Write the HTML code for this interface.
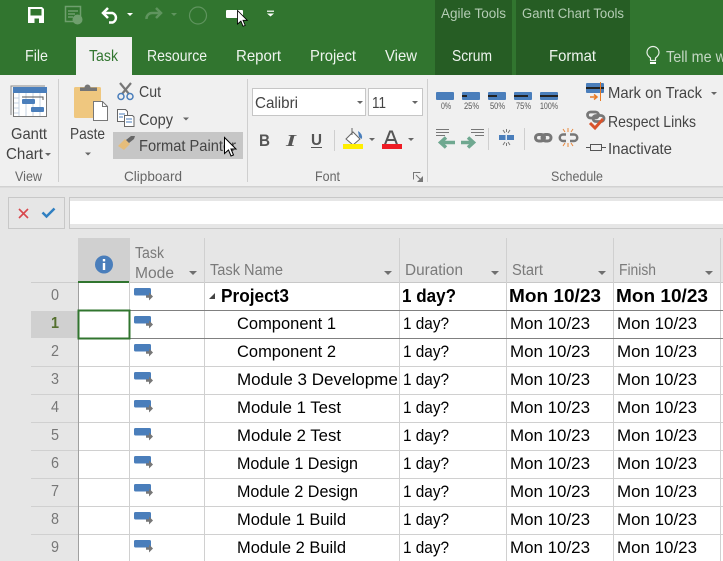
<!DOCTYPE html>
<html><head><meta charset="utf-8"><style>
html,body{margin:0;padding:0;background:#e6e6e6;width:723px;height:561px;overflow:hidden}
svg{display:block}
text{font-family:"Liberation Sans",sans-serif;font-size:16px;fill:#444;white-space:pre}
.t{fill:#eef4ee;font-size:16px}
.c{fill:#b4ccb4;font-size:13.5px}
.h{fill:#7a7a7a;font-size:15.5px}
.r{fill:#000;font-size:17px}
.b{fill:#000;font-size:18.5px;font-weight:bold}
.n{fill:#777;font-size:15.5px}
.g{fill:#666;font-size:14px}
.p{fill:#555;font-size:9.5px}
</style></head><body>
<svg width="723" height="561" viewBox="0 0 723 561" xmlns="http://www.w3.org/2000/svg">
<defs>
<clipPath id="nm"><rect x="205" y="360" width="193" height="30"/></clipPath>
<clipPath id="tm"><rect x="600" y="30" width="123" height="50"/></clipPath>
<g id="tmode"><rect x="134" y="0" width="17" height="7.5" rx="1.5" fill="#4a7ebb"/><path d="M146 8.500h4" stroke="#777" stroke-width="2.500"/><path d="M149 4.500l4 4-4 4z" fill="#777"/></g>
<path id="fc" d="M0 0h8l-4 4z" fill="#6f6f6f"/>
<path id="sc" d="M0 0h6l-3 3z" fill="#666"/>
<g id="arrow"><path d="M0 0v16l4-3.500 2.500 6 2.500-1-2.500-6h5z" fill="#fff" stroke="#000" stroke-width="1"/></g>
</defs>

<!-- title bar -->
<rect width="723" height="75" fill="#31752f"/>
<rect x="435" width="77" height="75" fill="#265d24"/>
<rect x="516" width="114" height="75" fill="#265d24"/>
<rect x="76" y="37" width="56" height="38" fill="#f0f0f0"/>

<!-- QAT -->
<path d="M28 7h14l2 2v14H28z" fill="#fff"/><rect x="30.500" y="9" width="11" height="6.500" fill="#31752f"/><rect x="34.500" y="18.500" width="4.500" height="4.500" fill="#31752f"/>
<g fill="none" stroke="#6f9f6e" stroke-width="1.500"><rect x="65.500" y="6.500" width="15" height="15"/><path d="M68 11h10M68 14h7M68 17h5"/></g><circle cx="77.500" cy="19.500" r="5" fill="#6f9f6e"/>
<g fill="none" stroke="#fff" stroke-width="2.500"><path d="M103 13h9.500a5 5 0 0 1 0 9.500H109"/><path d="M108 8l-5 5 5 5"/></g>
<path d="M127 13h6l-3 3z" fill="#fff"/>
<g fill="none" stroke="#5f945e" stroke-width="2.500"><path d="M161 13h-9a5.500 5.500 0 0 0-5.500 6"/><path d="M156 8l5 5-5 5"/></g>
<path d="M171 13h6l-3 3z" fill="#5f945e"/>
<circle cx="198" cy="15.500" r="8.500" fill="none" stroke="#5f945e" stroke-width="1.200"/>
<rect x="226" y="10" width="17" height="8" rx="1" fill="#fff"/>
<g transform="translate(237.500,10.500) scale(.85)"><use href="#arrow"/></g>
<path d="M267 11.200h7" stroke="#fff" stroke-width="1.200"/><path d="M267 13.500h7l-3.500 3z" fill="#fff"/>

<!-- tabs -->
<text class="t" x="25" y="61" textLength="23" lengthAdjust="spacingAndGlyphs">File</text>
<text x="89" y="61" textLength="29" lengthAdjust="spacingAndGlyphs" style="fill:#31752f">Task</text>
<text class="t" x="147" y="61" textLength="60" lengthAdjust="spacingAndGlyphs">Resource</text>
<text class="t" x="236" y="61" textLength="45" lengthAdjust="spacingAndGlyphs">Report</text>
<text class="t" x="310" y="61" textLength="46" lengthAdjust="spacingAndGlyphs">Project</text>
<text class="t" x="385" y="61" textLength="32" lengthAdjust="spacingAndGlyphs">View</text>
<text class="t" x="452" y="61" textLength="40" lengthAdjust="spacingAndGlyphs">Scrum</text>
<text class="t" x="549" y="61" textLength="47" lengthAdjust="spacingAndGlyphs">Format</text>
<text class="c" x="441" y="18" textLength="65" lengthAdjust="spacingAndGlyphs">Agile Tools</text>
<text class="c" x="522" y="18" textLength="102" lengthAdjust="spacingAndGlyphs">Gantt Chart Tools</text>
<path d="M650.500 60.500v-2.500c-2-1.500-3.500-3.500-3.500-5.500a6 6 0 0 1 12 0c0 2-1.500 4-3.500 5.500v2.500z" fill="none" stroke="#e8f0e8" stroke-width="1.200"/><path d="M650 63h6" stroke="#fff" stroke-width="2"/>
<g clip-path="url(#tm)"><text x="666" y="62" textLength="80" lengthAdjust="spacingAndGlyphs" style="fill:#c5d8c5">Tell me what</text></g>

<!-- ribbon -->
<rect y="75" width="723" height="111" fill="#f0f0f0"/>
<rect y="186" width="723" height="1.500" fill="#d2d2d2"/>
<g fill="#cfcfcf"><rect x="58" y="79" width="1" height="103"/><rect x="247" y="79" width="1" height="103"/><rect x="427" y="79" width="1" height="103"/></g>

<!-- Gantt icon -->
<path d="M11 115V86h34" fill="none" stroke="#8a8a8a"/>
<rect x="13.500" y="87.500" width="33" height="29" fill="#fff" stroke="#777"/>
<rect x="13" y="87" width="34" height="6" fill="#4a7ebb"/>
<path d="M19 93v23M26 93v23M33 93v23M40 93v23M14 98h5M14 103h5M14 108h5M14 113h5" stroke="#c5d3e3"/>
<path d="M22 97h21v3" fill="none" stroke="#555"/>
<rect x="22" y="99" width="13" height="5" rx="1" fill="#4a7ebb"/><rect x="31" y="107" width="13" height="5" rx="1" fill="#4a7ebb"/>
<text x="11" y="139" textLength="36" lengthAdjust="spacingAndGlyphs">Gantt</text>
<text x="6" y="159" textLength="37" lengthAdjust="spacingAndGlyphs">Chart</text>
<use href="#sc" x="45" y="153"/>
<text class="g" x="15" y="181" textLength="27" lengthAdjust="spacingAndGlyphs">View</text>

<!-- Clipboard -->
<rect x="74" y="87" width="27" height="31" rx="1.500" fill="#efc77f"/>
<path d="M80 91v-3.500h4.500a3 3 0 0 1 6 0H97V91z" fill="#757575"/>
<path d="M93.500 101.500h9l5 5v14h-14z" fill="#fff" stroke="#777"/><path d="M102.500 101.500v5h5" fill="none" stroke="#777"/>
<text x="70" y="139" textLength="35" lengthAdjust="spacingAndGlyphs">Paste</text>
<use href="#sc" x="85" y="152.500"/>
<g fill="none" stroke="#777" stroke-width="2.200"><path d="M120 83l9 11M131 83l-9 11"/></g>
<g fill="none" stroke="#4a7ebb" stroke-width="1.500"><circle cx="121" cy="96.500" r="3"/><circle cx="130" cy="96.500" r="3"/></g>
<text x="139" y="97" textLength="22" lengthAdjust="spacingAndGlyphs">Cut</text>
<g stroke="#666" fill="#fff"><path d="M117.500 109.500h8l2 2v10h-10z"/><path d="M124.500 115.500h8l1.500 1.500v9.500h-9.500z"/></g>
<path d="M119 114h6M119 117h4M126 119h6M126 122h6" stroke="#4a7ebb"/>
<text x="139" y="125" textLength="34" lengthAdjust="spacingAndGlyphs">Copy</text>
<use href="#sc" x="183" y="117.500"/>
<rect x="113" y="132" width="130" height="27" fill="#c6c6c6"/>
<path d="M118 146l7-7 5 5-6 6z" fill="#e6bd7a"/><path d="M126 140l5-4 4 0-1 3-5 4z" fill="#666"/>
<text x="139" y="151" textLength="97" lengthAdjust="spacingAndGlyphs">Format Painter</text>
<use href="#arrow" x="224.500" y="137.500"/>
<text class="g" x="124" y="181" textLength="58" lengthAdjust="spacingAndGlyphs">Clipboard</text>

<!-- Font -->
<rect x="252.500" y="88.500" width="113" height="27" fill="#fff" stroke="#c6c6c6"/>
<rect x="368.500" y="88.500" width="54" height="27" fill="#fff" stroke="#c6c6c6"/>
<text x="255" y="108" textLength="43" lengthAdjust="spacingAndGlyphs" style="fill:#444">Calibri</text>
<text x="372" y="108" textLength="14" lengthAdjust="spacingAndGlyphs">11</text>
<use href="#sc" x="357" y="101"/><use href="#sc" x="412" y="101"/>
<text x="259" y="146" textLength="11" lengthAdjust="spacingAndGlyphs" style="font-weight:bold;font-size:17px;fill:#555">B</text>
<text x="286" y="146" textLength="10" lengthAdjust="spacingAndGlyphs" style="font-weight:bold;font-style:italic;font-family:'Liberation Serif',serif;font-size:17px;fill:#555">I</text>
<text x="311" y="145" textLength="11" lengthAdjust="spacingAndGlyphs" style="font-weight:bold;font-size:16px;fill:#555">U</text>
<rect x="311" y="147" width="11" height="1" fill="#555"/>
<rect x="334" y="130" width="1" height="21" fill="#cfcfcf"/>
<path d="M346 139l7-7 7 7-7 6z" fill="#fff" stroke="#666"/><path d="M352 128v7" stroke="#666"/><path d="M358 131q5 3 4 8l-3-2z" fill="#4a7ebb"/>
<rect x="343" y="144" width="20" height="5" fill="#ffee00"/>
<use href="#sc" x="369" y="138"/>
<path d="M385 144.500l5-13h2l5 13M387 140h8" fill="none" stroke="#555" stroke-width="2"/>
<rect x="382" y="144" width="20" height="5" fill="#ee1c25"/>
<use href="#sc" x="408" y="138"/>
<text class="g" x="315" y="181" textLength="25" lengthAdjust="spacingAndGlyphs">Font</text>
<path d="M413.500 179.500v-7h7M416 175l6 6" fill="none" stroke="#777"/><path d="M423 176v6h-6z" fill="#777"/>

<!-- Schedule: percents -->
<g fill="#4a7ebb"><rect x="436" y="92" width="18" height="8" rx="1"/><rect x="462" y="92" width="18" height="8" rx="1"/><rect x="488" y="92" width="18" height="8" rx="1"/><rect x="514" y="92" width="18" height="8" rx="1"/><rect x="540" y="92" width="18" height="8" rx="1"/></g>
<g fill="#222"><rect x="462" y="95" width="5" height="2"/><rect x="488" y="95" width="9" height="2"/><rect x="514" y="95" width="14" height="2"/><rect x="540" y="95" width="18" height="2"/></g>
<text class="p" x="441" y="109" textLength="10" lengthAdjust="spacingAndGlyphs">0%</text>
<text class="p" x="464" y="109" textLength="15" lengthAdjust="spacingAndGlyphs">25%</text>
<text class="p" x="490" y="109" textLength="15" lengthAdjust="spacingAndGlyphs">50%</text>
<text class="p" x="516" y="109" textLength="15" lengthAdjust="spacingAndGlyphs">75%</text>
<text class="p" x="540" y="109" textLength="18" lengthAdjust="spacingAndGlyphs">100%</text>

<path d="M436 129.500h13M436 132.500h13M436 135.500h9M471 129.500h13M471 132.500h13M475 135.500h9" stroke="#777"/>
<path d="M441 142.500h14M446 137.500l-5.500 5 5.500 5" fill="none" stroke="#6fa890" stroke-width="3.500"/>
<path d="M461 142.500h13M468 137.500l5.500 5-5.500 5" fill="none" stroke="#6fa890" stroke-width="3.500"/>
<rect x="488" y="128" width="1" height="22" fill="#cfcfcf"/>
<rect x="499" y="135" width="15" height="5" fill="#4a7ebb"/><rect x="505.500" y="134" width="1.500" height="7" fill="#dfe9f4"/>
<path d="M503 130l2 3M510 130l-2 3M503 145l2-3M510 145l-2-3M506.500 129v3M506.500 143v3" stroke="#777"/>
<rect x="524" y="128" width="1" height="22" fill="#cfcfcf"/>
<g fill="none" stroke="#777" stroke-width="3"><rect x="535.500" y="134.500" width="9" height="6.500" rx="3.200"/><rect x="542" y="134.500" width="9" height="6.500" rx="3.200"/></g>
<g fill="none" stroke="#777" stroke-width="2.500"><path d="M566 134.500h-3a3.200 3.200 0 0 0 0 6.500h3M570 134.500h4a3.200 3.200 0 0 1 0 6.500h-4"/></g>
<path d="M568 128v4M568 143v4M563 129l2 3M573 129l-2 3M563 146l2-3M573 146l-2-3" stroke="#e8873a"/>

<!-- Schedule right -->
<rect x="586" y="83" width="18" height="10" rx="1" fill="#4a7ebb"/><rect x="586" y="87" width="18" height="2" fill="#222"/>
<rect x="600" y="82" width="1" height="19" fill="#e97b25"/>
<path d="M590 97h6M594 94.500l3 2.500-3 2.500" fill="none" stroke="#e97b25" stroke-width="1.500"/>
<text x="608" y="98" textLength="94" lengthAdjust="spacingAndGlyphs">Mark on Track</text>
<use href="#sc" x="711" y="92"/>
<g fill="none" stroke="#777" stroke-width="2.800"><rect x="587.500" y="112" width="11" height="6" rx="3"/><rect x="593" y="115.500" width="11" height="6" rx="3"/></g>
<path d="M590 123l5 5 8-9" fill="none" stroke="#d9532c" stroke-width="3"/>
<text x="608" y="127" textLength="88" lengthAdjust="spacingAndGlyphs">Respect Links</text>
<rect x="590.500" y="144.500" width="11" height="6" fill="none" stroke="#555"/><path d="M586 147.500h4.500M601.500 147.500h4.500" stroke="#555"/>
<text x="608" y="154" textLength="64" lengthAdjust="spacingAndGlyphs">Inactivate</text>
<text class="g" x="551" y="181" textLength="52" lengthAdjust="spacingAndGlyphs">Schedule</text>

<!-- formula bar -->
<rect x="8.500" y="197.500" width="56" height="31" fill="#e6e6e6" stroke="#c8c8c8"/>
<path d="M19 209l9 9M28 209l-9 9" stroke="#d8484d" stroke-width="1.600"/>
<path d="M42.500 212.500l4 4 8-8" fill="none" stroke="#2f7fc1" stroke-width="2.500"/>
<path d="M69.500 229v-31.500H723" fill="none" stroke="#c8c8c8"/><rect x="69" y="228" width="654" height="1" fill="#c8c8c8"/>
<rect x="70" y="201" width="653" height="23" fill="#fff"/>

<!-- table -->
<rect x="78" y="283" width="645" height="278" fill="#fff"/>
<rect x="78" y="238" width="51" height="43" fill="#d0d0d0"/>
<rect x="31" y="282" width="47" height="1" fill="#cdcdcd"/><rect x="130" y="282" width="593" height="1" fill="#c8c8c8"/>
<rect x="78" y="281" width="52" height="2" fill="#31752f"/>
<rect x="31" y="311" width="47" height="27" fill="#d0d0d0"/>
<g fill="#d0d0d0">
<rect x="78" y="366" width="645" height="1"/><rect x="78" y="394" width="645" height="1"/><rect x="78" y="422" width="645" height="1"/><rect x="78" y="450" width="645" height="1"/><rect x="78" y="478" width="645" height="1"/><rect x="78" y="506" width="645" height="1"/><rect x="78" y="534" width="645" height="1"/>
<rect x="31" y="366" width="47" height="1"/><rect x="31" y="394" width="47" height="1"/><rect x="31" y="422" width="47" height="1"/><rect x="31" y="450" width="47" height="1"/><rect x="31" y="478" width="47" height="1"/><rect x="31" y="506" width="47" height="1"/><rect x="31" y="534" width="47" height="1"/>
<rect x="129" y="238" width="1" height="323"/><rect x="204" y="238" width="1" height="323"/><rect x="399" y="238" width="1" height="323"/><rect x="506" y="238" width="1" height="323"/><rect x="613" y="238" width="1" height="323"/><rect x="720" y="238" width="1" height="323"/>
</g>
<rect x="78" y="310" width="645" height="1" fill="#808080"/><rect x="78" y="338" width="645" height="1" fill="#808080"/>
<rect x="78" y="283" width="1" height="278" fill="#a0a0a0"/>
<rect x="78.500" y="310.500" width="51" height="28" fill="#fff" stroke="#31752f" stroke-width="2"/>

<circle cx="104" cy="264.500" r="9" fill="#4a7ebb"/><rect x="102.800" y="263" width="2.400" height="7" fill="#fff"/><rect x="102.800" y="259" width="2.400" height="2.400" fill="#fff"/>
<text class="h" x="135" y="258" textLength="29" lengthAdjust="spacingAndGlyphs">Task</text>
<text class="h" x="135" y="278" textLength="39" lengthAdjust="spacingAndGlyphs">Mode</text>
<text class="h" x="210" y="275" textLength="73" lengthAdjust="spacingAndGlyphs">Task Name</text>
<text class="h" x="405" y="275" textLength="58" lengthAdjust="spacingAndGlyphs">Duration</text>
<text class="h" x="512" y="275" textLength="31" lengthAdjust="spacingAndGlyphs">Start</text>
<text class="h" x="619" y="275" textLength="37" lengthAdjust="spacingAndGlyphs">Finish</text>
<use href="#fc" x="189" y="271"/><use href="#fc" x="384" y="271"/><use href="#fc" x="491" y="271"/><use href="#fc" x="598" y="271"/><use href="#fc" x="705" y="271"/>

<!-- row numbers -->
<text class="n" x="51" y="300" textLength="8" lengthAdjust="spacingAndGlyphs">0</text>
<text x="51" y="328" textLength="8" lengthAdjust="spacingAndGlyphs" style="font-weight:bold;font-size:15.500px;fill:#55702f">1</text>
<text class="n" x="51" y="356" textLength="8" lengthAdjust="spacingAndGlyphs">2</text>
<text class="n" x="51" y="384" textLength="8" lengthAdjust="spacingAndGlyphs">3</text>
<text class="n" x="51" y="412" textLength="8" lengthAdjust="spacingAndGlyphs">4</text>
<text class="n" x="51" y="440" textLength="8" lengthAdjust="spacingAndGlyphs">5</text>
<text class="n" x="51" y="468" textLength="8" lengthAdjust="spacingAndGlyphs">6</text>
<text class="n" x="51" y="496" textLength="8" lengthAdjust="spacingAndGlyphs">7</text>
<text class="n" x="51" y="524" textLength="8" lengthAdjust="spacingAndGlyphs">8</text>
<text class="n" x="51" y="552" textLength="8" lengthAdjust="spacingAndGlyphs">9</text>

<!-- mode icons -->
<use href="#tmode" y="288"/><use href="#tmode" y="316"/><use href="#tmode" y="344"/><use href="#tmode" y="372"/><use href="#tmode" y="400"/><use href="#tmode" y="428"/><use href="#tmode" y="456"/><use href="#tmode" y="484"/><use href="#tmode" y="512"/><use href="#tmode" y="540"/>

<!-- row 0 -->
<path d="M209 299h6v-6z" fill="#444"/>
<text class="b" x="221" y="302" textLength="68" lengthAdjust="spacingAndGlyphs">Project3</text>
<text class="b" x="402" y="302" textLength="54" lengthAdjust="spacingAndGlyphs">1 day?</text>
<text class="b" x="509" y="302" textLength="92" lengthAdjust="spacingAndGlyphs">Mon 10/23</text>
<text class="b" x="616" y="302" textLength="92" lengthAdjust="spacingAndGlyphs">Mon 10/23</text>

<!-- names -->
<text class="r" x="237" y="329" textLength="99" lengthAdjust="spacingAndGlyphs">Component 1</text>
<text class="r" x="237" y="357" textLength="99" lengthAdjust="spacingAndGlyphs">Component 2</text>
<g clip-path="url(#nm)"><text class="r" x="237" y="385" textLength="175" lengthAdjust="spacingAndGlyphs">Module 3 Development</text></g>
<text class="r" x="237" y="413" textLength="104" lengthAdjust="spacingAndGlyphs">Module 1 Test</text>
<text class="r" x="237" y="441" textLength="104" lengthAdjust="spacingAndGlyphs">Module 2 Test</text>
<text class="r" x="237" y="469" textLength="121" lengthAdjust="spacingAndGlyphs">Module 1 Design</text>
<text class="r" x="237" y="497" textLength="121" lengthAdjust="spacingAndGlyphs">Module 2 Design</text>
<text class="r" x="237" y="525" textLength="109" lengthAdjust="spacingAndGlyphs">Module 1 Build</text>
<text class="r" x="237" y="553" textLength="109" lengthAdjust="spacingAndGlyphs">Module 2 Build</text>

<!-- durations -->
<text class="r" x="403" y="329" textLength="46" lengthAdjust="spacingAndGlyphs">1 day?</text>
<text class="r" x="403" y="357" textLength="46" lengthAdjust="spacingAndGlyphs">1 day?</text>
<text class="r" x="403" y="385" textLength="46" lengthAdjust="spacingAndGlyphs">1 day?</text>
<text class="r" x="403" y="413" textLength="46" lengthAdjust="spacingAndGlyphs">1 day?</text>
<text class="r" x="403" y="441" textLength="46" lengthAdjust="spacingAndGlyphs">1 day?</text>
<text class="r" x="403" y="469" textLength="46" lengthAdjust="spacingAndGlyphs">1 day?</text>
<text class="r" x="403" y="497" textLength="46" lengthAdjust="spacingAndGlyphs">1 day?</text>
<text class="r" x="403" y="525" textLength="46" lengthAdjust="spacingAndGlyphs">1 day?</text>
<text class="r" x="403" y="553" textLength="46" lengthAdjust="spacingAndGlyphs">1 day?</text>

<!-- start -->
<text class="r" x="510" y="329" textLength="80" lengthAdjust="spacingAndGlyphs">Mon 10/23</text>
<text class="r" x="510" y="357" textLength="80" lengthAdjust="spacingAndGlyphs">Mon 10/23</text>
<text class="r" x="510" y="385" textLength="80" lengthAdjust="spacingAndGlyphs">Mon 10/23</text>
<text class="r" x="510" y="413" textLength="80" lengthAdjust="spacingAndGlyphs">Mon 10/23</text>
<text class="r" x="510" y="441" textLength="80" lengthAdjust="spacingAndGlyphs">Mon 10/23</text>
<text class="r" x="510" y="469" textLength="80" lengthAdjust="spacingAndGlyphs">Mon 10/23</text>
<text class="r" x="510" y="497" textLength="80" lengthAdjust="spacingAndGlyphs">Mon 10/23</text>
<text class="r" x="510" y="525" textLength="80" lengthAdjust="spacingAndGlyphs">Mon 10/23</text>
<text class="r" x="510" y="553" textLength="80" lengthAdjust="spacingAndGlyphs">Mon 10/23</text>

<!-- finish -->
<text class="r" x="617" y="329" textLength="80" lengthAdjust="spacingAndGlyphs">Mon 10/23</text>
<text class="r" x="617" y="357" textLength="80" lengthAdjust="spacingAndGlyphs">Mon 10/23</text>
<text class="r" x="617" y="385" textLength="80" lengthAdjust="spacingAndGlyphs">Mon 10/23</text>
<text class="r" x="617" y="413" textLength="80" lengthAdjust="spacingAndGlyphs">Mon 10/23</text>
<text class="r" x="617" y="441" textLength="80" lengthAdjust="spacingAndGlyphs">Mon 10/23</text>
<text class="r" x="617" y="469" textLength="80" lengthAdjust="spacingAndGlyphs">Mon 10/23</text>
<text class="r" x="617" y="497" textLength="80" lengthAdjust="spacingAndGlyphs">Mon 10/23</text>
<text class="r" x="617" y="525" textLength="80" lengthAdjust="spacingAndGlyphs">Mon 10/23</text>
<text class="r" x="617" y="553" textLength="80" lengthAdjust="spacingAndGlyphs">Mon 10/23</text>
</svg>
</body></html>
